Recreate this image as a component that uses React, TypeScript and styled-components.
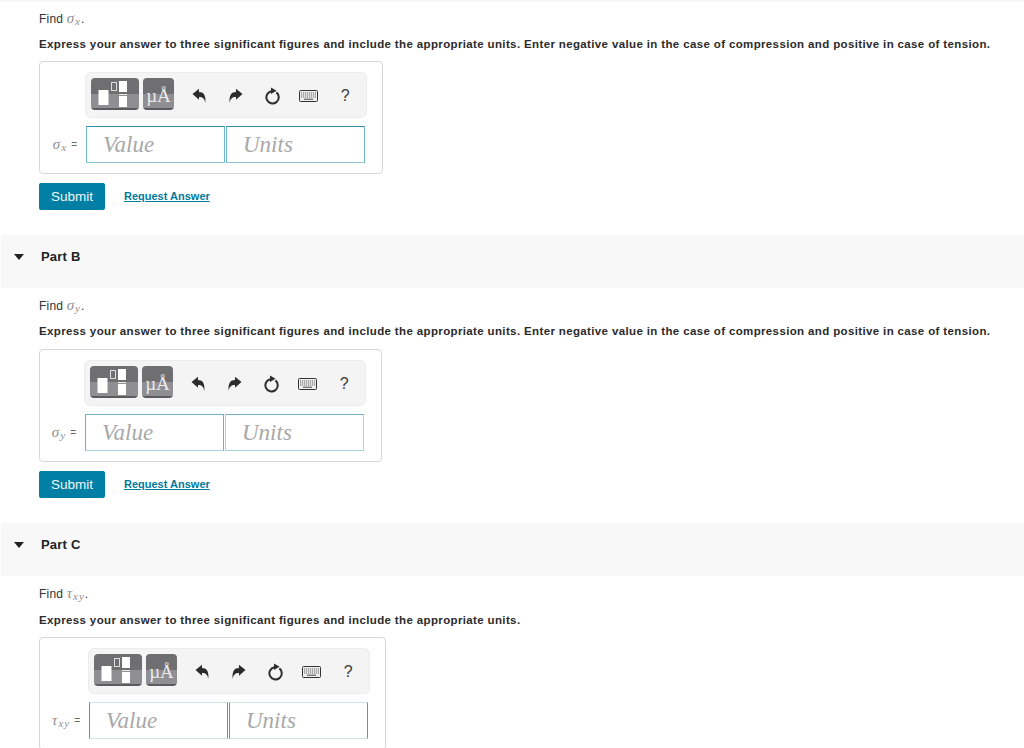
import styled, { createGlobalStyle } from 'styled-components';

const GlobalStyle = createGlobalStyle`
  html, body {
    margin: 0;
    height: 748px;
    overflow: hidden;
    background: #fff;
  }
  body {
    font-family: "Liberation Sans", Arial, sans-serif;
    color: #2b2b2b;
  }
`;

const Page = styled.div`
  width: 1024px;
  padding-top: 7px;
  border-top: 2px solid #f7f7f7;
`;

const PartHeader = styled.div`
  height: 53px;
  margin-left: 1px;
  margin-bottom: 8px;
  background: #f8f8f8;
  display: flex;
  align-items: flex-start;
  padding-top: 14px;
  box-sizing: border-box;
`;

const Caret = styled.span`
  width: 0;
  height: 0;
  margin: 5px 0 0 13px;
  border-left: 5px solid transparent;
  border-right: 5px solid transparent;
  border-top: 6px solid #222;
`;

const PartTitle = styled.h2`
  margin: 0 0 0 17px;
  font-size: 13px;
  line-height: 15px;
  font-weight: bold;
  letter-spacing: 0.2px;
  color: #222;
`;

const Body = styled.div<{ $tail: number }>`
  padding-left: 39px;
  padding-bottom: ${(p) => p.$tail}px;
`;

const Find = styled.p`
  margin: 0;
  height: 19px;
  font-size: 12px;
  line-height: 19px;
  color: #333;
  letter-spacing: 0.2px;
`;

const Instruction = styled.p<{ $gap: number }>`
  margin: ${(p) => p.$gap}px 0 0;
  height: 20px;
  font-size: 11.5px;
  line-height: 20px;
  font-weight: bold;
  color: #2b2b2b;
  letter-spacing: 0.365px;
  white-space: nowrap;
`;

const Symbol = styled.span`
  font-family: "Liberation Serif", serif;
  font-style: italic;
  font-size: 15px;
  letter-spacing: 1px;
  color: #8f8f8f;
  sub {
    font-size: 11px;
    line-height: 0;
    vertical-align: -2px;
  }
`;

const AnswerBox = styled.div<{ $width: number; $gap: number }>`
  width: ${(p) => p.$width}px;
  box-sizing: border-box;
  margin-top: ${(p) => p.$gap}px;
  height: 113px;
  padding: 10px 16px 0 0;
  border: 1px solid #d6d6d6;
  border-radius: 4px;
  display: grid;
  grid-template-columns: ${(p) => p.$width - 299}px 282px;
  grid-template-rows: 46px 37px;
  row-gap: 8px;
`;

const Toolbar = styled.div`
  grid-column: 2;
  box-sizing: border-box;
  border: 1px solid #ececec;
  border-radius: 6px;
  background: #f4f4f4;
  display: flex;
  align-items: flex-start;
  padding: 5px 0 0 5px;
`;

const TemplateButton = styled.div<{ $width: number }>`
  position: relative;
  width: ${(p) => p.$width}px;
  height: 32px;
  margin-right: 4px;
  border-radius: 4px;
  overflow: hidden;
  background: linear-gradient(#6f6f72 0, #6f6f72 50%, #8e8e93 50%, #8e8e93 94%, #5c5c5f 94%);
  display: flex;
  align-items: center;
  justify-content: center;
`;

const MicroAngstrom = styled.span`
  font-family: "Liberation Serif", serif;
  font-size: 19px;
  line-height: 19px;
  color: #eaeaea;
  margin-top: 2px;
`;

const ToolIcons = styled.div`
  display: flex;
  align-items: center;
  margin: 6px 0 0 3px;
`;

const ToolSlot = styled.span`
  width: 36.5px;
  height: 24px;
  display: flex;
  align-items: center;
  justify-content: center;
  font-size: 16px;
  color: #3a3a3a;
`;

const FieldLabel = styled.div`
  grid-column: 1;
  grid-row: 2;
  display: flex;
  align-items: center;
  justify-content: flex-end;
  padding-right: 8px;
  font-size: 10px;
  color: #666;
  gap: 4px;
`;

const Fields = styled.div`
  grid-column: 2;
  grid-row: 2;
  display: flex;
  gap: 1px;
  padding-left: 1px;
`;

const Field = styled.div<{ $top: string; $side: string; $bottom: string }>`
  width: 139px;
  height: 37px;
  box-sizing: border-box;
  border-style: solid;
  border-width: 1px;
  border-color: ${(p) => `${p.$top} ${p.$side} ${p.$bottom}`};
  padding-left: 16px;
  font-family: "Liberation Serif", serif;
  font-style: italic;
  font-size: 23px;
  line-height: 35px;
  color: #a8a8a8;
`;

const Actions = styled.div`
  display: flex;
  align-items: center;
  margin-top: 9px;
  height: 27px;
`;

const Submit = styled.button`
  width: 66px;
  height: 27px;
  padding: 0;
  border: 0;
  border-radius: 2px;
  background: #007ea3;
  color: #f2f8fa;
  font-family: inherit;
  font-size: 13.5px;
`;

const RequestLink = styled.a`
  margin: 0 0 2px 19px;
  font-size: 11px;
  font-weight: bold;
  color: #007a9c;
  text-decoration: underline;
`;

const Slot = () => (
  <svg width="48" height="32" viewBox="0 0 48 32" style={{ position: 'absolute', left: 0, top: 0 }}>
    <rect x="7.5" y="12" width="10" height="15" fill="#fff" />
    <rect x="20.5" y="4.5" width="5" height="8" fill="none" stroke="#ddd" />
    <rect x="28" y="3" width="8" height="11" fill="#fff" />
    <rect x="28" y="16" width="8" height="1" fill="#eee" />
    <rect x="28" y="18" width="8" height="11" fill="#fff" />
  </svg>
);

const Undo = ({ flip }: { flip?: boolean }) => (
  <svg width="15" height="16" viewBox="0 0 15 16" style={flip ? { transform: 'scaleX(-1)' } : undefined}>
    <path d="M0.5 6 L7 0.8 V4 C11.5 4 14 7 13.4 15 C12.5 10.8 11 9 7 9 V11.8 Z" fill="#2c2c2c" />
  </svg>
);

const Redo = () => <Undo flip />;

const Refresh = () => (
  <svg width="17" height="18" viewBox="0 0 17 18">
    <path d="M7.4 4.2 A6.2 6.2 0 1 0 12.4 5.4" fill="none" stroke="#2e2e2e" strokeWidth="2" />
    <path d="M7 0.4 L12.6 3.8 L7 7 Z" fill="#2e2e2e" />
  </svg>
);

const Keyboard = () => (
  <svg width="19" height="12" viewBox="0 0 19 12">
    <rect x="0.5" y="0.5" width="18" height="11" rx="1" fill="#eee" stroke="#333" />
    <path d="M2 3h15M2 5h15M2 7h15" stroke="#666" strokeDasharray="1.2 0.8" />
    <path d="M5 9.2h9" stroke="#444" />
  </svg>
);

type Tone = { top: string; left: string; right: string; bottom: string };

type AnswerProps = {
  symbol: string;
  sub: string;
  width: number;
  tail: number;
  tone: Tone;
  noteGap: number;
  boxGap: number;
  showActions?: boolean;
};

const Answer = ({ symbol, sub, width, tail, tone, noteGap, boxGap, showActions = true }: AnswerProps) => (
  <Body $tail={tail}>
    <Find>
      Find{' '}
      <Symbol>
        {symbol}
        <sub>{sub}</sub>
      </Symbol>
      .
    </Find>
    <Instruction $gap={noteGap}>
      Express your answer to three significant figures and include the appropriate units.
      {symbol === 'σ' &&
        ' Enter negative value in the case of compression and positive in case of tension.'}
    </Instruction>
    <AnswerBox $width={width} $gap={boxGap}>
      <Toolbar>
        <TemplateButton $width={48}>
          <Slot />
        </TemplateButton>
        <TemplateButton $width={31}>
          <MicroAngstrom>µÅ</MicroAngstrom>
        </TemplateButton>
        <ToolIcons>
          <ToolSlot>
            <Undo />
          </ToolSlot>
          <ToolSlot>
            <Redo />
          </ToolSlot>
          <ToolSlot>
            <Refresh />
          </ToolSlot>
          <ToolSlot>
            <Keyboard />
          </ToolSlot>
          <ToolSlot>?</ToolSlot>
        </ToolIcons>
      </Toolbar>
      <FieldLabel>
        <Symbol>
          {symbol}
          <sub>{sub}</sub>
        </Symbol>
        =
      </FieldLabel>
      <Fields>
        <Field $top={tone.top} $side={tone.left} $bottom={tone.bottom}>
          Value
        </Field>
        <Field $top={tone.top} $side={tone.right} $bottom={tone.bottom}>
          Units
        </Field>
      </Fields>
    </AnswerBox>
    {showActions && (
      <Actions>
        <Submit>Submit</Submit>
        <RequestLink href="#">Request Answer</RequestLink>
      </Actions>
    )}
  </Body>
);

const Part = ({ title }: { title: string }) => (
  <PartHeader>
    <Caret />
    <PartTitle>{title}</PartTitle>
  </PartHeader>
);

const toneA = { top: '#2f8ba6', left: '#6fb6c9', right: '#6fb6c9', bottom: '#8cc6d5' };
const toneB = { top: '#6fb0c3', left: '#6fb0c3', right: '#a9d3de', bottom: '#a9d3de' };
const toneC = { top: '#cfe3ea', left: '#4f9cb4', right: '#4f9cb4', bottom: '#cfe3ea' };

const App = () => (
  <Page>
    <GlobalStyle />
    <Answer symbol="σ" sub="x" width={344} tail={25} tone={toneA} noteGap={6} boxGap={7} />
    <Part title="Part B" />
    <Answer symbol="σ" sub="y" width={343} tail={25} tone={toneB} noteGap={6} boxGap={8} />
    <Part title="Part C" />
    <Answer symbol="τ" sub="xy" width={347} tail={0} tone={toneC} noteGap={7} boxGap={7} showActions={false} />
  </Page>
);

export default App;
